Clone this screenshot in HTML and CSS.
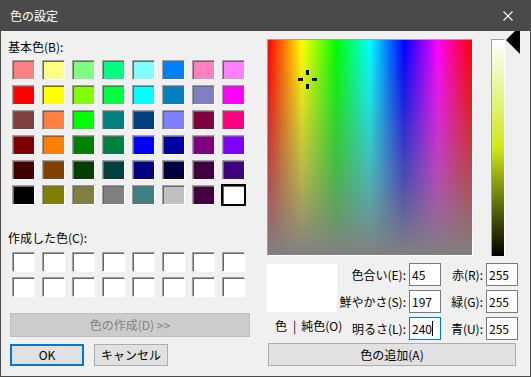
FILE: index.html
```html
<!DOCTYPE html>
<html lang="ja">
<head>
<meta charset="utf-8">
<title>色の設定</title>
<link rel="stylesheet" href="styles.css">
</head>
<body>
<div class="window">
  <div class="titlebar">
    <span class="title">色の設定</span>
    <svg class="close" width="10" height="10" viewBox="0 0 10 10"><path d="M0.5 0.5L9.5 9.5M9.5 0.5L0.5 9.5" stroke="#fff" stroke-width="1.1" fill="none"/></svg>
  </div>
  <div class="content">
    <div class="left">
      <div class="label basic-label">基本色(B):</div>
      <div class="swatches">
        <div class="sw" style="background:#ff8080"></div><div class="sw" style="background:#ffff80"></div><div class="sw" style="background:#80ff80"></div><div class="sw" style="background:#00ff80"></div><div class="sw" style="background:#80ffff"></div><div class="sw" style="background:#0080ff"></div><div class="sw" style="background:#ff80c0"></div><div class="sw" style="background:#ff80ff"></div>
        <div class="sw" style="background:#ff0000"></div><div class="sw" style="background:#ffff00"></div><div class="sw" style="background:#80ff00"></div><div class="sw" style="background:#00ff40"></div><div class="sw" style="background:#00ffff"></div><div class="sw" style="background:#0080c0"></div><div class="sw" style="background:#8080c0"></div><div class="sw" style="background:#ff00ff"></div>
        <div class="sw" style="background:#804040"></div><div class="sw" style="background:#ff8040"></div><div class="sw" style="background:#00ff00"></div><div class="sw" style="background:#008080"></div><div class="sw" style="background:#004080"></div><div class="sw" style="background:#8080ff"></div><div class="sw" style="background:#800040"></div><div class="sw" style="background:#ff0080"></div>
        <div class="sw" style="background:#800000"></div><div class="sw" style="background:#ff8000"></div><div class="sw" style="background:#008000"></div><div class="sw" style="background:#008040"></div><div class="sw" style="background:#0000ff"></div><div class="sw" style="background:#0000a0"></div><div class="sw" style="background:#800080"></div><div class="sw" style="background:#8000ff"></div>
        <div class="sw" style="background:#400000"></div><div class="sw" style="background:#804000"></div><div class="sw" style="background:#004000"></div><div class="sw" style="background:#004040"></div><div class="sw" style="background:#000080"></div><div class="sw" style="background:#000040"></div><div class="sw" style="background:#400040"></div><div class="sw" style="background:#400080"></div>
        <div class="sw" style="background:#000000"></div><div class="sw" style="background:#808000"></div><div class="sw" style="background:#808040"></div><div class="sw" style="background:#808080"></div><div class="sw" style="background:#408080"></div><div class="sw" style="background:#c0c0c0"></div><div class="sw" style="background:#400040"></div><div class="sw selected" style="background:#ffffff"></div>
      </div>
      <div class="label custom-label">作成した色(C):</div>
      <div class="swatches custom">
        <div class="sw"></div><div class="sw"></div><div class="sw"></div><div class="sw"></div><div class="sw"></div><div class="sw"></div><div class="sw"></div><div class="sw"></div>
        <div class="sw"></div><div class="sw"></div><div class="sw"></div><div class="sw"></div><div class="sw"></div><div class="sw"></div><div class="sw"></div><div class="sw"></div>
      </div>
      <button class="btn define" disabled>色の作成(D) &gt;&gt;</button>
      <div class="btn-row">
        <button class="btn ok">OK</button>
        <button class="btn cancel">キャンセル</button>
      </div>
    </div>
    <div class="right">
      <div class="picker-row">
        <div class="spectrum">
          <div class="spectrum-fade"></div>
          <svg class="cross" width="19" height="19" viewBox="0 0 19 19">
            <rect x="8" y="0" width="3" height="5" fill="#000"/>
            <rect x="0" y="8" width="5" height="3" fill="#000"/>
            <rect x="14" y="8" width="5" height="3" fill="#000"/>
            <rect x="8" y="14" width="3" height="5" fill="#000"/>
          </svg>
        </div>
        <div class="lum-wrap">
          <div class="lum"></div>
          <svg class="arrow" width="14" height="23" viewBox="0 0 14 23"><polygon points="0,9 9,0 14,0 14,23" fill="#000"/></svg>
        </div>
      </div>
      <div class="fields-row">
        <div class="preview-col">
          <div class="preview"></div>
          <div class="preview-label"><span class="pl-color">色</span><span class="pl-sep">|</span><span class="pl-solid">純色(O)</span></div>
        </div>
        <div class="fields">
          <div class="flabel">色合い(E):</div><div class="field">45</div>
          <div class="flabel">赤(R):</div><div class="field">255</div>
          <div class="flabel">鮮やかさ(S):</div><div class="field">197</div>
          <div class="flabel">緑(G):</div><div class="field">255</div>
          <div class="flabel">明るさ(L):</div><div class="field focus">240<span class="caret"></span></div>
          <div class="flabel">青(U):</div><div class="field">255</div>
        </div>
      </div>
      <button class="btn add">色の追加(A)</button>
    </div>
  </div>
</div>
</body>
</html>
```

FILE: styles.css
```css
* { box-sizing: border-box; }
html, body {
  margin: 0;
  padding: 0;
  background: #f0f0f0;
}
body {
  font-family: "Noto Sans CJK JP", "Noto Sans", sans-serif;
  font-size: 12px;
  color: #000;
}
.window {
  width: 531px;
  height: 377px;
  border: 1px solid #4a4a4a;
  border-top: none;
  background: #f0f0f0;
  display: flex;
  flex-direction: column;
  overflow: hidden;
}
.titlebar {
  height: 31px;
  margin: 0 -1px;
  background: #4a4a4a;
  color: #fff;
  display: flex;
  align-items: center;
  padding-left: 10px;
  flex-shrink: 0;
  position: relative;
  z-index: 2;
}
.title {
  font-size: 12px;
  line-height: 16px;
}
.close {
  margin-left: auto;
  margin-right: 18px;
  display: block;
}
.content {
  display: flex;
  flex: 1;
}
.left {
  width: 266px;
  display: flex;
  flex-direction: column;
  padding-left: 7px;
}
.label {
  line-height: 16px;
  height: 16px;
}
.basic-label { margin-top: 8px; }
.swatches {
  display: grid;
  grid-template-columns: repeat(8, 23px);
  grid-auto-rows: 20px;
  column-gap: 7px;
  row-gap: 5px;
  margin-left: 4px;
  margin-top: 5px;
}
.sw {
  border-top: 1px solid #a0a0a0;
  border-left: 1px solid #a0a0a0;
  border-right: 1px solid #fff;
  border-bottom: 1px solid #fff;
  box-shadow: inset 1px 1px 0 #696969;
  background: #fff;
}
.sw.selected {
  outline: 2px solid #000;
  outline-offset: -1px;
}
.custom-label { margin-top: 25px; }
.swatches.custom { margin-top: 6px; }
.btn {
  font-family: inherit;
  font-size: 12px;
  color: #000;
  background: #e1e1e1;
  border: 1px solid #adadad;
  padding: 0;
  margin: 0;
  line-height: 16px;
}
.define {
  margin-top: 16px;
  margin-left: 2px;
  width: 240px;
  height: 24px;
  background: #cccccc;
  border-color: #bfbfbf;
  color: #838383;
}
.btn-row {
  display: flex;
  gap: 10px;
  margin-top: 7px;
  margin-left: 2px;
}
.ok {
  width: 74px;
  height: 22px;
  border: 2px solid #0078d7;
}
.cancel {
  width: 74px;
  height: 22px;
}
.right {
  flex: 1;
  display: flex;
  flex-direction: column;
}
.picker-row {
  display: flex;
  margin-top: 8px;
}
.spectrum {
  width: 206px;
  height: 217px;
  border-top: 1px solid #a0a0a0;
  border-left: 1px solid #a0a0a0;
  border-right: 1px solid #fff;
  border-bottom: 1px solid #fff;
  background: linear-gradient(to right, #ff0000 0%, #ffff00 16.67%, #00ff00 33.33%, #00ffff 50%, #0000ff 66.67%, #ff00ff 83.33%, #ff0000 100%);
  position: relative;
}
.spectrum-fade {
  width: 100%;
  height: 100%;
  background: linear-gradient(to bottom, rgba(128,128,128,0) 0%, rgba(128,128,128,0.25) 30%, rgba(128,128,128,0.6) 65%, rgba(128,128,128,1) 100%);
}
.cross {
  position: absolute;
  left: 30px;
  top: 30px;
  display: block;
}
.lum-wrap {
  position: relative;
  margin-left: 18px;
  width: 14px;
  height: 217px;
}
.lum {
  width: 14px;
  height: 217px;
  border-top: 1px solid #a0a0a0;
  border-left: 1px solid #a0a0a0;
  border-right: 1px solid #fff;
  background: linear-gradient(to bottom, #ffffff 0%, rgb(206,232,23) 50%, #000000 100%);
}
.arrow {
  position: absolute;
  left: 15px;
  top: -8px;
  display: block;
}
.fields-row {
  display: flex;
  margin-top: 7px;
}
.preview-col {
  width: 70px;
  flex-shrink: 0;
  display: flex;
  flex-direction: column;
}
.preview {
  margin-top: 1px;
  width: 70px;
  height: 48px;
  background: #fff;
}
.preview-label {
  margin-top: 6px;
  line-height: 16px;
  display: flex;
  padding-left: 8px;
  white-space: nowrap;
  width: 80px;
}
.preview-label span { flex-shrink: 0; }
.pl-color { width: 12px; }
.pl-sep { margin: 0 5px 0 6px; }
.fields {
  display: grid;
  grid-template-columns: 72px 32px 45px 32px;
  grid-auto-rows: 23px;
  row-gap: 4px;
}
.flabel {
  text-align: right;
  padding-right: 3px;
  line-height: 23px;
  white-space: nowrap;
}
.field {
  background: #fff;
  border: 1px solid #7a7a7a;
  padding-left: 2px;
  line-height: 21px;
  display: flex;
  align-items: center;
}
.field.focus { border-color: #0078d7; }
.caret {
  display: inline-block;
  width: 1px;
  height: 15px;
  background: #000;
}
.add {
  margin-top: 3px;
  margin-left: 1px;
  width: 248px;
  height: 23px;
}
```
